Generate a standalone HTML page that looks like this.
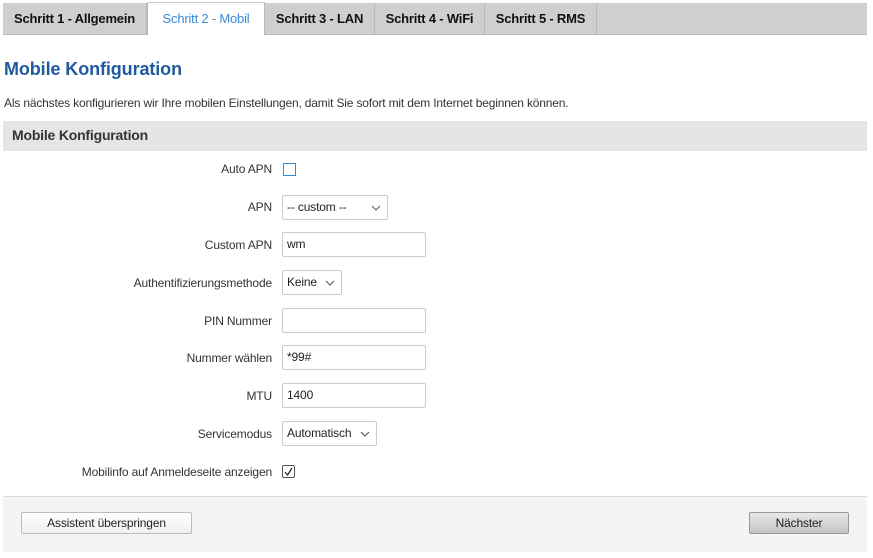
<!DOCTYPE html>
<html><head><meta charset="utf-8"><style>
*{box-sizing:border-box;margin:0;padding:0}
body{width:873px;height:558px;background:#fff;font-family:"Liberation Sans",Arial,sans-serif;position:relative;overflow:hidden;color:#333}
.a{position:absolute}
.tabs{left:3px;top:3px;width:864px;height:32px;background:#cfcfcf;border-bottom:1px solid #bbb}
.tab{position:absolute;top:0;height:32px;line-height:31px;text-align:center;font-size:13px;font-weight:bold;color:#111;border-right:1px solid #b8b8b8;letter-spacing:-0.2px}
.tab.on{background:#fff;color:#3a8ad8;font-weight:normal;height:33px;border-left:1px solid #b8b8b8;border-top:1px solid #ccc}
.lbl{position:absolute;right:601px;font-size:12px;color:#333;line-height:14px;letter-spacing:-0.15px}
.in{position:absolute;left:282px;height:25px;border:1px solid #ccc;border-radius:2px;background:#fff;font-size:12px;line-height:23px;padding-left:4px;color:#222;letter-spacing:-0.15px}
.sel svg{position:absolute;right:6px;top:9px}
.btn{position:absolute;height:22px;border:1px solid #bbb;border-radius:2px;font-size:12px;text-align:center;line-height:20px;color:#222;letter-spacing:-0.15px}
</style></head><body>
<div class="a tabs">
<div class="tab" style="left:0;width:144px">Schritt 1 - Allgemein</div>
<div class="tab on" style="left:144px;width:118px;top:-1px">Schritt 2 - Mobil</div>
<div class="tab" style="left:262px;width:110px">Schritt 3 - LAN</div>
<div class="tab" style="left:372px;width:110px">Schritt 4 - WiFi</div>
<div class="tab" style="left:482px;width:112px">Schritt 5 - RMS</div>
</div>
<div class="a" style="left:4px;top:59px;font-size:18px;font-weight:bold;color:#1f5a9e;letter-spacing:-0.1px">Mobile Konfiguration</div>
<div class="a" style="left:4px;top:96px;font-size:12px;color:#333;letter-spacing:-0.17px">Als nächstes konfigurieren wir Ihre mobilen Einstellungen, damit Sie sofort mit dem Internet beginnen können.</div>
<div class="a" style="left:3px;top:121px;width:864px;height:30px;background:#e5e5e5;font-size:14px;font-weight:bold;color:#333;line-height:29px;padding-left:9px;letter-spacing:-0.2px">Mobile Konfiguration</div>

<div class="lbl" style="top:162px">Auto APN</div>
<div class="a" style="left:283px;top:163px;width:13px;height:13px;border:1px solid #2a8fd8"></div>

<div class="lbl" style="top:200px">APN</div>
<div class="in sel" style="top:195px;width:106px">-- custom --<svg width="10" height="6"><path d="M1 1l4 4 4-4" stroke="#555" fill="none"/></svg></div>

<div class="lbl" style="top:238px">Custom APN</div>
<div class="in" style="top:232px;width:144px">wm</div>

<div class="lbl" style="top:276px">Authentifizierungsmethode</div>
<div class="in sel" style="top:270px;width:60px">Keine<svg width="10" height="6"><path d="M1 1l4 4 4-4" stroke="#555" fill="none"/></svg></div>

<div class="lbl" style="top:314px">PIN Nummer</div>
<div class="in" style="top:308px;width:144px"></div>

<div class="lbl" style="top:351px">Nummer wählen</div>
<div class="in" style="top:345px;width:144px">*99#</div>

<div class="lbl" style="top:389px">MTU</div>
<div class="in" style="top:383px;width:144px">1400</div>

<div class="lbl" style="top:427px">Servicemodus</div>
<div class="in sel" style="top:421px;width:95px">Automatisch<svg width="10" height="6"><path d="M1 1l4 4 4-4" stroke="#555" fill="none"/></svg></div>

<div class="lbl" style="top:465px">Mobilinfo auf Anmeldeseite anzeigen</div>
<div class="a" style="left:282px;top:465px;width:13px;height:13px;border:1px solid #555;border-radius:2px"><svg width="11" height="11" style="position:absolute;left:0;top:0"><path d="M2 6l2.5 3L9 2" stroke="#222" fill="none" stroke-width="1.2"/></svg></div>

<div class="a" style="left:3px;top:496px;width:864px;height:56px;background:#f4f4f4;border-top:1px solid #ddd"></div>
<div class="btn" style="left:21px;top:512px;width:171px;background:linear-gradient(#fff,#f0f0f0)">Assistent überspringen</div>
<div class="btn" style="left:749px;top:512px;width:100px;background:linear-gradient(#e8e8e8,#c4c4c4);border-color:#999">Nächster</div>
</body></html>
